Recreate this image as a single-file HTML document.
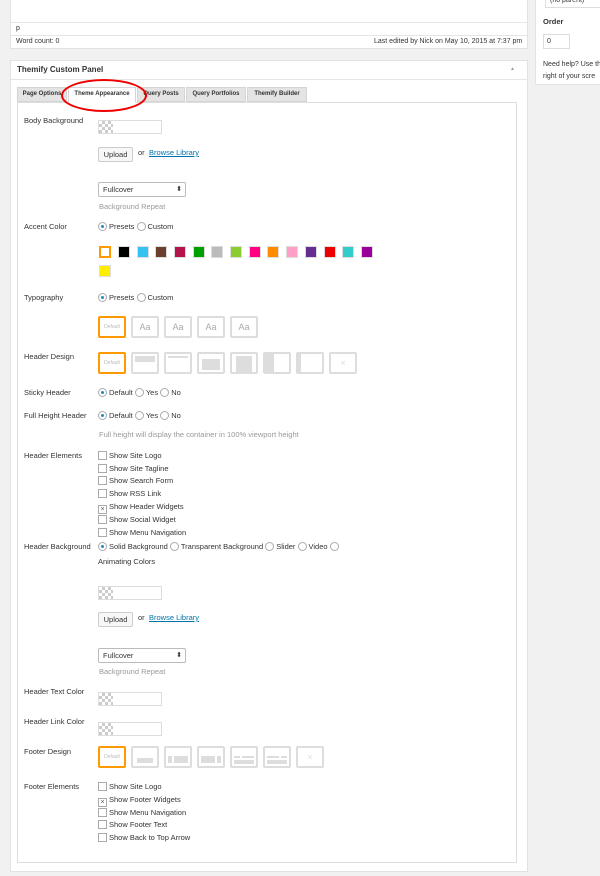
<!DOCTYPE html><html><head><meta charset="utf-8"><style>
*{margin:0;padding:0;box-sizing:border-box}
body{width:600px;height:876px;background:#f1f1f1;font-family:"Liberation Sans",sans-serif;font-size:7.5px;color:#333;position:relative;overflow:hidden}
.a{position:absolute;white-space:nowrap}
.box{position:absolute;background:#fff;border:1px solid #e2e2e2}
.lbl{position:absolute;left:24px;white-space:nowrap}
.sw{position:absolute;width:64px;height:14px;border:1px solid #ddd;background:#fff}
.sw:before{content:"";position:absolute;left:0;top:0;width:14px;height:12px;background:repeating-conic-gradient(#ccc 0 25%,#fff 0 50%) 0 0/6px 6px}
.btn{position:absolute;width:35px;height:15px;border:1px solid #ccc;background:#f7f7f7;border-radius:2px;text-align:center;line-height:13px}
.lnk{position:absolute;white-space:nowrap;color:#0073aa;text-decoration:underline}
.sel{position:absolute;width:88px;height:15px;border:1px solid #bbb;background:#fff;border-radius:2px;padding-left:4px;line-height:13px}
.sel:after{content:"⬍";position:absolute;right:3px;top:0;font-size:7px}
.note{position:absolute;color:#999;white-space:nowrap}
.r{display:inline-block;width:9px;height:9px;border:1px solid #aaa;border-radius:50%;vertical-align:-2px;margin-right:2px;position:relative;background:#fff}
.r.on:after{content:"";position:absolute;left:2px;top:2px;width:3px;height:3px;border-radius:50%;background:#1e8cbe}
.cb{display:inline-block;width:9px;height:9px;border:1px solid #aaa;vertical-align:-2px;margin-right:2px;font-size:7px;line-height:7px;text-align:center;color:#555;background:#fff}
.c{position:absolute;width:12px;height:12px;border:1px solid #ddd}
.t{position:absolute;width:28px;height:22px;border:2px solid #ddd;border-radius:2px;background:#fff;color:#aaa;text-align:center;line-height:18px;font-size:9px}
.t.d{border-color:#f90;font-size:5px;color:#bbb}
.t i{position:absolute;background:#ddd}
.tab{position:absolute;top:87px;height:15px;background:#e4e4e4;border:1px solid #d5d5d5;font-size:6px;font-weight:bold;line-height:13px;text-align:center}
</style></head><body>
<div class="box" style="left:10px;top:-2px;width:518px;height:51px"></div>
<div class="a" style="left:10px;top:22px;width:518px;border-top:1px solid #e5e5e5"></div>
<div class="a" style="left:16px;top:25px;font-size:7px">p</div>
<div class="a" style="left:11px;top:35px;width:516px;height:13px;background:#fff;border-top:1px solid #e5e5e5"></div>
<div class="a" style="left:16px;top:38px;font-size:7px">Word count: 0</div>
<div class="a" style="left:374px;top:38px;font-size:7px">Last edited by Nick on May 10, 2015 at 7:37 pm</div>
<div class="box" style="left:535px;top:-2px;width:70px;height:87px"></div>
<div class="a" style="left:545px;top:-4px;width:60px;height:12px;border:1px solid #ddd;font-size:7px;padding-left:4px">(no parent)</div>
<div class="a" style="left:543px;top:17px;font-weight:bold;font-size:7.5px">Order</div>
<div class="a" style="left:543px;top:34px;width:27px;height:15px;border:1px solid #ddd;padding:3px;font-size:7px">0</div>
<div class="a" style="left:543px;top:59px;font-size:7px;line-height:12px">Need help? Use th<br>right of your scre</div>

<div class="box" style="left:10px;top:60px;width:518px;height:812px"></div>
<div class="a" style="left:10px;top:79px;width:518px;border-top:1px solid #e5e5e5"></div>
<div class="a" style="left:17px;top:65px;font-weight:bold;font-size:8px">Themify Custom Panel</div>
<div class="a" style="left:510px;top:66px;font-size:5px;color:#999">▲</div>
<div class="tab" style="left:17px;width:50px">Page Options</div>
<div class="tab" style="left:137px;width:48px">Query Posts</div>
<div class="tab" style="left:186px;width:60px">Query Portfolios</div>
<div class="tab" style="left:247px;width:60px">Themify Builder</div>
<div class="box" style="left:17px;top:102px;width:500px;height:761px;border-color:#ddd"></div>
<div class="tab" style="left:68px;width:68px;background:#fff;border-bottom-color:#fff;top:87px;height:16px">Theme Appearance</div>
<div class="a" style="left:61px;top:79px;width:86px;height:33px;border:2px solid #e00;border-radius:50%"></div>

<div class="lbl" style="top:116px">Body Background</div>
<div class="sw" style="left:98px;top:120px"></div>
<div class="btn" style="left:98px;top:147px">Upload</div>
<div class="a" style="left:138px;top:148px">or</div><div class="lnk" style="left:149px;top:148px">Browse Library</div>
<div class="sel" style="left:98px;top:182px">Fullcover</div>
<div class="note" style="left:99px;top:202px">Background Repeat</div>

<div class="lbl" style="top:222px">Accent Color</div>
<div class="a" style="left:98px;top:222px"><span class="r on"></span>Presets <span class="r"></span>Custom</div>
<div class="c" style="left:99px;top:246px;border:2px solid #f90;background:#fff"></div>
<div class="c" style="left:118px;top:246px;background:#000"></div>
<div class="c" style="left:137px;top:246px;background:#33c3f0"></div>
<div class="c" style="left:155px;top:246px;background:#6b3e2e"></div>
<div class="c" style="left:174px;top:246px;background:#b5134b"></div>
<div class="c" style="left:193px;top:246px;background:#00a000"></div>
<div class="c" style="left:211px;top:246px;background:#bbb"></div>
<div class="c" style="left:230px;top:246px;background:#8ccc33"></div>
<div class="c" style="left:249px;top:246px;background:#ff0080"></div>
<div class="c" style="left:267px;top:246px;background:#ff8c00"></div>
<div class="c" style="left:286px;top:246px;background:#ff9fc8"></div>
<div class="c" style="left:305px;top:246px;background:#662d91"></div>
<div class="c" style="left:324px;top:246px;background:#e00"></div>
<div class="c" style="left:342px;top:246px;background:#33cccc"></div>
<div class="c" style="left:361px;top:246px;background:#990099"></div>
<div class="c" style="left:99px;top:265px;background:#ffee00"></div>

<div class="lbl" style="top:293px">Typography</div>
<div class="a" style="left:98px;top:293px"><span class="r on"></span>Presets <span class="r"></span>Custom</div>
<div class="t d" style="left:98px;top:316px">Default</div>
<div class="t" style="left:131px;top:316px">Aa</div>
<div class="t" style="left:164px;top:316px">Aa</div>
<div class="t" style="left:197px;top:316px">Aa</div>
<div class="t" style="left:230px;top:316px">Aa</div>

<div class="lbl" style="top:352px">Header Design</div>
<div class="t d" style="left:98px;top:352px">Default</div>
<div class="t" style="left:131px;top:352px"><i style="left:2px;top:2px;width:20px;height:6px"></i></div>
<div class="t" style="left:164px;top:352px"><i style="left:2px;top:2px;width:20px;height:2px"></i></div>
<div class="t" style="left:197px;top:352px"><i style="left:3px;top:5px;width:18px;height:11px"></i></div>
<div class="t" style="left:230px;top:352px"><i style="left:4px;top:2px;width:16px;height:16px"></i></div>
<div class="t" style="left:263px;top:352px"><i style="left:0;top:0;width:9px;height:18px"></i></div>
<div class="t" style="left:296px;top:352px"><i style="left:0;top:0;width:3px;height:18px"></i></div>
<div class="t" style="left:329px;top:352px;color:#ddd">×</div>

<div class="lbl" style="top:388px">Sticky Header</div>
<div class="a" style="left:98px;top:388px"><span class="r on"></span>Default <span class="r"></span>Yes <span class="r"></span>No</div>
<div class="lbl" style="top:411px">Full Height Header</div>
<div class="a" style="left:98px;top:411px"><span class="r on"></span>Default <span class="r"></span>Yes <span class="r"></span>No</div>
<div class="note" style="left:99px;top:430px">Full height will display the container in 100% viewport height</div>

<div class="lbl" style="top:451px">Header Elements</div>
<div class="a" style="left:98px;top:450px;line-height:12.7px"><span class="cb"></span>Show Site Logo<br><span class="cb"></span>Show Site Tagline<br><span class="cb"></span>Show Search Form<br><span class="cb"></span>Show RSS Link<br><span class="cb">×</span>Show Header Widgets<br><span class="cb"></span>Show Social Widget<br><span class="cb"></span>Show Menu Navigation</div>

<div class="lbl" style="top:542px">Header Background</div>
<div class="a" style="left:98px;top:542px"><span class="r on"></span>Solid Background <span class="r"></span>Transparent Background <span class="r"></span>Slider <span class="r"></span>Video <span class="r"></span></div>
<div class="a" style="left:98px;top:557px">Animating Colors</div>
<div class="sw" style="left:98px;top:586px"></div>
<div class="btn" style="left:98px;top:612px">Upload</div>
<div class="a" style="left:138px;top:613px">or</div><div class="lnk" style="left:149px;top:613px">Browse Library</div>
<div class="sel" style="left:98px;top:648px">Fullcover</div>
<div class="note" style="left:99px;top:667px">Background Repeat</div>

<div class="lbl" style="top:687px">Header Text Color</div>
<div class="sw" style="left:98px;top:692px"></div>
<div class="lbl" style="top:717px">Header Link Color</div>
<div class="sw" style="left:98px;top:722px"></div>

<div class="lbl" style="top:747px">Footer Design</div>
<div class="t d" style="left:98px;top:746px">Default</div>
<div class="t" style="left:131px;top:746px"><i style="left:4px;top:10px;width:16px;height:5px"></i></div>
<div class="t" style="left:164px;top:746px"><i style="left:2px;top:8px;width:4px;height:7px"></i><i style="left:8px;top:8px;width:14px;height:7px"></i></div>
<div class="t" style="left:197px;top:746px"><i style="left:2px;top:8px;width:14px;height:7px"></i><i style="left:18px;top:8px;width:4px;height:7px"></i></div>
<div class="t" style="left:230px;top:746px"><i style="left:2px;top:8px;width:6px;height:2px"></i><i style="left:10px;top:8px;width:12px;height:2px"></i><i style="left:2px;top:12px;width:20px;height:4px"></i></div>
<div class="t" style="left:263px;top:746px"><i style="left:2px;top:8px;width:12px;height:2px"></i><i style="left:16px;top:8px;width:6px;height:2px"></i><i style="left:2px;top:12px;width:20px;height:4px"></i></div>
<div class="t" style="left:296px;top:746px;color:#ddd">×</div>

<div class="lbl" style="top:782px">Footer Elements</div>
<div class="a" style="left:98px;top:781px;line-height:12.6px"><span class="cb"></span>Show Site Logo<br><span class="cb">×</span>Show Footer Widgets<br><span class="cb"></span>Show Menu Navigation<br><span class="cb"></span>Show Footer Text<br><span class="cb"></span>Show Back to Top Arrow</div>
</body></html>
